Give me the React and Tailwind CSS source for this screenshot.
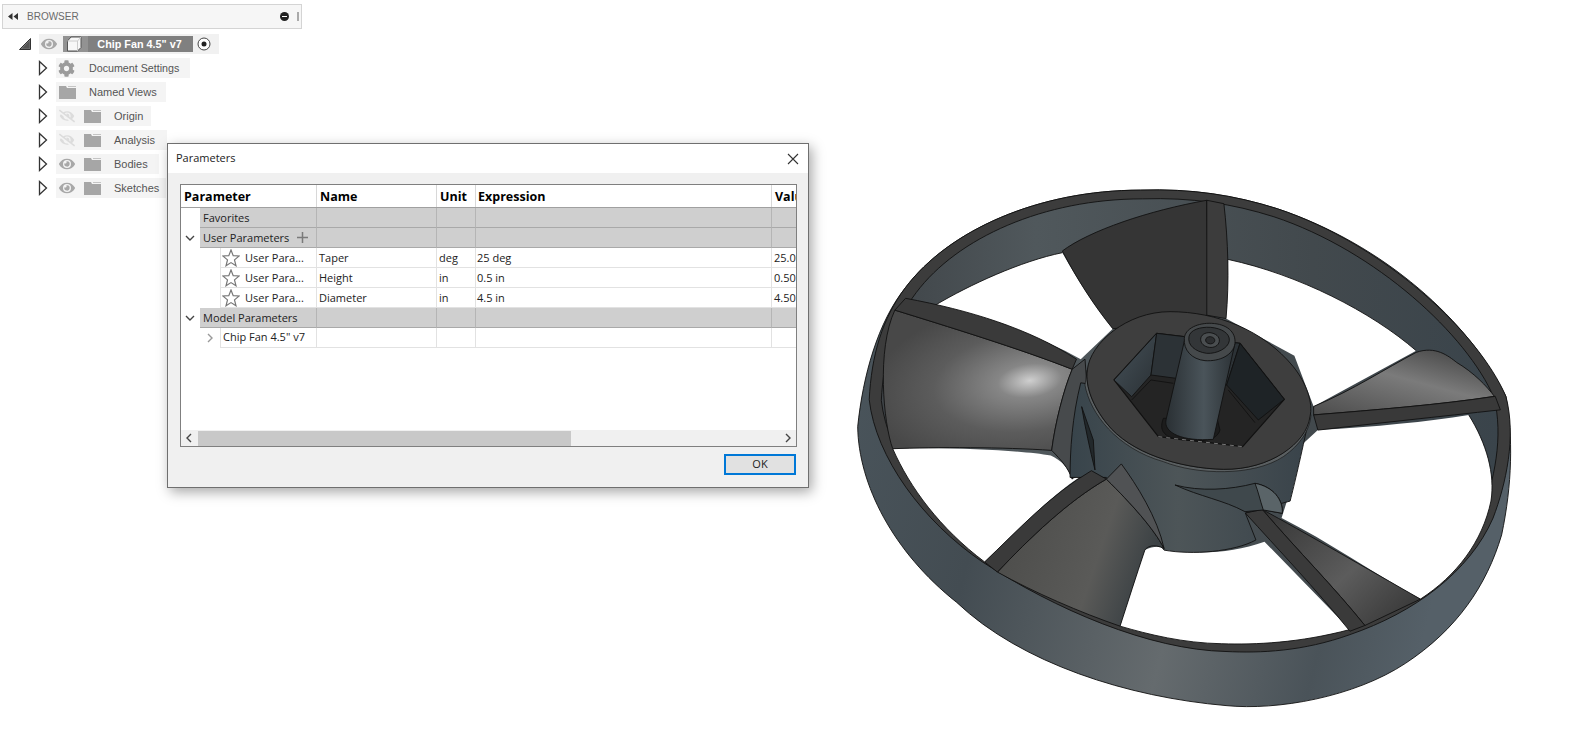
import React from 'react'
import { FaCog, FaEye, FaEyeSlash } from 'react-icons/fa'

const dialogFont = { fontFamily: '"Open Sans", "Noto Sans", sans-serif' }

const Expander = () => (
  <svg width="10" height="16" viewBox="0 0 10 16" className="shrink-0">
    <path d="M1.5 1.5 L8.5 8 L1.5 14.5 Z" fill="#fff" stroke="#333" strokeWidth="1.3" />
  </svg>
)

const Folder = () => (
  <svg width="17" height="13" viewBox="0 0 17 13" className="shrink-0">
    <path d="M0 0 H7 L8 2 H17 V13 H0 Z" fill="#a6a6a6" />
    <path d="M9 0 H17 V1 H9 Z" fill="#c4c4c4" />
  </svg>
)

// one row of the browser tree
const TreeRow = ({ label, width, eye, gear }) => (
  <div className="flex items-center h-5 mb-1">
    <div className="w-[36px]" />
    <Expander />
    <div className="ml-[8px] h-5 flex items-center bg-[#f4f4f4]" style={{ width }}>
      {eye === 'on' && <FaEye className="ml-[3px] w-[16px] h-[16px] text-[#a8a8a8] shrink-0" />}
      {eye === 'off' && <FaEyeSlash className="ml-[3px] w-[16px] h-[16px] text-[#dcdcdc] shrink-0" />}
      {gear ? (
        <FaCog className="ml-[2px] w-[17px] h-[17px] text-[#9b9b9b] shrink-0" />
      ) : (
        <div className={eye ? 'ml-[9px]' : 'ml-[3px]'}><Folder /></div>
      )}
      <span className={gear ? 'ml-[14px] text-[10.7px] text-[#555] whitespace-nowrap' : 'ml-[13px] text-[11px] text-[#555] whitespace-nowrap'}>{label}</span>
    </div>
  </div>
)

const Browser = () => (
  <div className="w-[303px] shrink-0 pl-[2px] pt-[4px]" style={{ fontFamily: '"Liberation Sans", Arial, sans-serif' }}>
    <div className="w-[300px] h-[25px] flex items-center bg-[#f6f6f6] border border-[#d4d4d4]">
      <svg width="10" height="7" viewBox="0 0 10 7" className="ml-[5px]">
        <path d="M4.5 0 L0 3.5 L4.5 7 Z M10 0 L5.5 3.5 L10 7 Z" fill="#333" />
      </svg>
      <span className="ml-[9px] text-[10px] text-[#6a6a6a]">BROWSER</span>
      <div className="ml-auto w-[9px] h-[9px] rounded-full bg-[#222] flex items-center justify-center">
        <div className="w-[5px] h-[1.5px] bg-white" />
      </div>
      <div className="ml-[8px] mr-[2px] w-[2px] h-[9px] border-x border-[#aaa]" />
    </div>
    <div className="flex items-center h-5 mt-[5px] mb-1">
      <svg width="12" height="12" viewBox="0 0 12 12" className="ml-[17px] shrink-0">
        <path d="M0.5 11.5 L11.5 0.5 V11.5 Z" fill="#777" stroke="#333" />
        <path d="M3 10.5 L10.5 3 V10.5 Z" fill="#555" />
      </svg>
      <div className="ml-[8px] w-[180px] h-5 flex items-center bg-[#f1f1f1]">
        <FaEye className="ml-[2px] w-[16px] h-[16px] text-[#a8a8a8] shrink-0" />
        <div className="ml-[6px] w-[25px] h-[16px] bg-[#929292] flex items-center pl-[3px]">
          <svg width="16" height="16" viewBox="0 0 16 16">
            <path d="M1.5 5 L5 1 H15 V11.5 L11.5 15 H1.5 Z" fill="#f7f7f7" stroke="#555" />
            <path d="M1.5 5 H11.5 V15 M11.5 5 L15 1" fill="none" stroke="#ccc" />
          </svg>
        </div>
        <div className="w-[105px] h-[16px] bg-[#808080] text-white text-[10.8px] font-bold flex items-center justify-center pr-[2px]">
          Chip Fan 4.5" v7
        </div>
        <svg width="14" height="14" viewBox="0 0 14 14" className="ml-[4px]">
          <circle cx="7" cy="7" r="6" fill="#fff" stroke="#444" />
          <circle cx="7" cy="7" r="2.5" fill="#222" />
        </svg>
      </div>
    </div>
    <TreeRow label="Document Settings" width={134} gear />
    <TreeRow label="Named Views" width={110} />
    <TreeRow label="Origin" width={95} eye="off" />
    <TreeRow label="Analysis" width={111} eye="off" />
    <TreeRow label="Bodies" width={103} eye="on" />
    <TreeRow label="Sketches" width={110} eye="on" />
  </div>
)

const Chevron = ({ right }) => (
  <svg width="10" height="10" viewBox="0 0 10 10" className="shrink-0">
    {right ? (
      <path d="M3 1 L7 5 L3 9" fill="none" stroke="#999" strokeWidth="1.4" />
    ) : (
      <path d="M1 3 L5 7 L9 3" fill="none" stroke="#444" strokeWidth="1.4" />
    )}
  </svg>
)

const Star = () => (
  <svg width="18" height="18" viewBox="0 0 18 18" className="shrink-0">
    <path d="M9 1 L11.2 6.6 L17.2 7 L12.5 10.9 L14 16.8 L9 13.6 L4 16.8 L5.5 10.9 L0.8 7 L6.8 6.6 Z" fill="#fff" stroke="#777" strokeWidth="1.2" />
  </svg>
)

const columns = 'grid grid-cols-[135px_120px_39px_296px_30px]'

const GroupRow = ({ label, open, plus }) => (
  <div className={`${columns} h-5`}>
    <div className="flex items-center">
      <div className="w-[19px] flex justify-center pr-[1px]">{open && <Chevron />}</div>
      <div className="h-5 flex-1 bg-[#cfcfcf] border-b border-[#a9a9a9] flex items-center pl-[3px] whitespace-nowrap">
        <span className="pt-[1px]">{label}</span>
        {plus && (
          <svg width="11" height="11" viewBox="0 0 11 11" className="ml-[8px]">
            <path d="M5.5 0 V11 M0 5.5 H11" stroke="#7a7a7a" strokeWidth="1.5" />
          </svg>
        )}
      </div>
    </div>
    {[0, 1, 2, 3].map((i) => (
      <div key={i} className="bg-[#cfcfcf] border-b border-l border-b-[#a9a9a9] border-l-[#b5b5b5]" />
    ))}
  </div>
)

const ParamRow = ({ name, unit, expr, value }) => (
  <div className={`${columns} h-5`}>
    <div className="flex items-center pl-[39px]">
      <div className="h-5 flex-1 flex items-center border-l border-b border-[#e2e2e2] pl-[1px] gap-[5px] whitespace-nowrap">
        <Star />
        <span className="pt-[1px]">User Para...</span>
      </div>
    </div>
    <div className="flex items-center pl-[2px] pt-[1px] border-b border-l border-[#e2e2e2]">{name}</div>
    <div className="flex items-center pl-[2px] pt-[1px] border-b border-l border-[#e2e2e2]">{unit}</div>
    <div className="flex items-center pl-[1px] pt-[1px] border-b border-l border-[#e2e2e2]">{expr}</div>
    <div className="flex items-center pl-[2px] pt-[1px] border-b border-l border-[#e2e2e2] overflow-hidden">{value}</div>
  </div>
)

const ParametersDialog = () => (
  <div
    className="absolute left-[167px] top-[143px] w-[642px] h-[345px] bg-[#f0f0f0] border border-[#6f6f6f] shadow-[3px_4px_12px_rgba(0,0,0,0.35)] flex flex-col"
    style={dialogFont}
  >
    <div className="h-[29px] bg-white flex items-center justify-between pl-[8px] pr-[9px] shrink-0">
      <span className="text-[11px] text-[#222]">Parameters</span>
      <svg width="12" height="12" viewBox="0 0 12 12">
        <path d="M1 1 L11 11 M11 1 L1 11" stroke="#333" strokeWidth="1.1" />
      </svg>
    </div>
    <div className="mx-[12px] mt-[11px] w-[617px] h-[263px] bg-white border border-[#7f7f7f] flex flex-col overflow-hidden text-[11px] text-[#222]">
      <div className={`${columns} h-[23px] font-bold text-[12.5px] text-black border-b border-[#a0a0a0]`}>
        <div className="pl-[3px] pt-[2px] flex items-center">Parameter</div>
        <div className="pl-[3px] pt-[2px] flex items-center border-l border-[#d8d8d8]">Name</div>
        <div className="pl-[3px] pt-[2px] flex items-center border-l border-[#d8d8d8]">Unit</div>
        <div className="pl-[2px] pt-[2px] flex items-center border-l border-[#d8d8d8]">Expression</div>
        <div className="pl-[3px] pt-[2px] flex items-center border-l border-[#d8d8d8] overflow-hidden">Value</div>
      </div>
      <GroupRow label="Favorites" />
      <GroupRow label="User Parameters" open plus />
      <ParamRow name="Taper" unit="deg" expr="25 deg" value="25.00" />
      <ParamRow name="Height" unit="in" expr="0.5 in" value="0.50" />
      <ParamRow name="Diameter" unit="in" expr="4.5 in" value="4.50" />
      <GroupRow label="Model Parameters" open />
      <div className={`${columns} h-5`}>
        <div className="flex items-center">
          <div className="w-[39px] flex justify-end pr-[5px]"><Chevron right /></div>
          <div className="h-5 flex-1 border-l border-b border-[#e2e2e2] flex items-center pl-[2px] whitespace-nowrap">Chip Fan 4.5" v7</div>
        </div>
        <div className="border-b border-l border-[#e2e2e2]" />
        <div className="border-b border-l border-[#e2e2e2]" />
        <div className="border-b border-l border-[#e2e2e2]" />
        <div className="border-b border-l border-[#e2e2e2]" />
      </div>
      <div className="mt-auto h-[16px] bg-[#f0f0f0] flex items-center shrink-0">
        <div className="w-[16px] flex justify-center rotate-90"><Chevron /></div>
        <div className="ml-[1px] w-[373px] h-[15px] bg-[#c8c8c8]" />
        <div className="ml-auto w-[16px] flex justify-center -rotate-90"><Chevron /></div>
      </div>
    </div>
    <div className="flex justify-end pr-[12px] pt-[7px]">
      <button className="w-[72px] h-[21px] bg-[#e1e1e1] border-2 border-[#0078d7] text-[11px] text-[#222] flex items-center justify-center">OK</button>
    </div>
  </div>
)

// keeps line widths the same while the drawing groups below are scaled
const P = ({ d, fill = 'none', line = true, w = 0.9, stroke = '#111' }) => (
  <path d={d} fill={fill} stroke={line ? stroke : 'none'} strokeWidth={w} vectorEffect="non-scaling-stroke" strokeLinejoin="round" />
)

const OUTER_TOP = 'M45 650 C50 520 75 410 130 318 C230 150 440 30 680 30 C800 25 900 45 1000 85 C1250 190 1470 450 1535 640 C1560 760 1535 900 1505 1000 C1450 1160 1320 1280 1170 1345 C1060 1395 960 1400 880 1395 C700 1390 480 1270 310 1130 C170 1010 60 820 45 650 Z'

const Fan = () => (
  <svg width="670" height="530" viewBox="850 180 670 530" className="mt-[180px] ml-[547px] shrink-0">
    <defs>
      <linearGradient id="wall" x1="0" y1="0" x2="1" y2="0.2">
        <stop offset="0" stopColor="#4b565d" />
        <stop offset="0.3" stopColor="#434c52" />
        <stop offset="0.62" stopColor="#656b6e" />
        <stop offset="0.85" stopColor="#4a5359" />
        <stop offset="1" stopColor="#556068" />
      </linearGradient>
      <linearGradient id="innerWall" x1="0" y1="0" x2="1" y2="0">
        <stop offset="0" stopColor="#3f4448" />
        <stop offset="0.25" stopColor="#50585c" />
        <stop offset="0.7" stopColor="#42494d" />
        <stop offset="1" stopColor="#3a444b" />
      </linearGradient>
      <radialGradient id="leftBlade" gradientUnits="userSpaceOnUse" cx="420" cy="590" r="380" gradientTransform="rotate(-12 420 590) translate(0 210) scale(1 0.65)">
        <stop offset="0" stopColor="#cfcfcf" />
        <stop offset="0.2" stopColor="#868686" />
        <stop offset="0.6" stopColor="#5c5c5c" />
        <stop offset="1" stopColor="#484848" />
      </radialGradient>
      <linearGradient id="rightBlade" x1="0" y1="1" x2="0.75" y2="0">
        <stop offset="0" stopColor="#4c4c4c" />
        <stop offset="0.6" stopColor="#7b7b7b" />
        <stop offset="1" stopColor="#4a4a4a" />
      </linearGradient>
      <linearGradient id="lowerLeft" x1="0" y1="0" x2="1" y2="0.3">
        <stop offset="0" stopColor="#4a4a48" />
        <stop offset="0.7" stopColor="#5a5a58" />
        <stop offset="1" stopColor="#3b4144" />
      </linearGradient>
      <linearGradient id="lowerRight" x1="0" y1="0" x2="1" y2="0.8">
        <stop offset="0" stopColor="#343434" />
        <stop offset="0.6" stopColor="#5c5c5c" />
        <stop offset="1" stopColor="#3a3a3a" />
      </linearGradient>
      <linearGradient id="hubBody" x1="0" y1="0" x2="1" y2="0">
        <stop offset="0" stopColor="#38444b" />
        <stop offset="0.45" stopColor="#4d5558" />
        <stop offset="1" stopColor="#39434a" />
      </linearGradient>
      <linearGradient id="shaft" x1="0" y1="0" x2="1" y2="0">
        <stop offset="0" stopColor="#2a3034" />
        <stop offset="0.55" stopColor="#4a545a" />
        <stop offset="1" stopColor="#2c3236" />
      </linearGradient>
      <linearGradient id="hexWall" x1="0" y1="0" x2="1" y2="1">
        <stop offset="0" stopColor="#46525a" />
        <stop offset="1" stopColor="#2a3034" />
      </linearGradient>
    </defs>

    {/* coordinates traced on the fan crop, ring and blades */}
    <g transform="translate(850 180) scale(0.4273 0.338)">
      <P fill="url(#wall)" d="M18 730 C30 580 65 420 130 318 C230 150 440 30 680 30 C800 25 900 45 1000 85 C1250 190 1450 420 1535 640 C1552 760 1550 900 1525 1050 C1490 1200 1420 1330 1300 1430 C1180 1530 1000 1570 880 1555 C650 1530 400 1430 250 1250 C100 1100 20 900 18 730 Z" />
      <P fill="#3c3c3c" d={OUTER_TOP} />
      <g transform="translate(790 710) scale(0.962) translate(-790 -710)">
        <P fill="url(#innerWall)" d={OUTER_TOP} />
      </g>
      {/* see-through gaps between the blades */}
      <P fill="#fff" line={false} d="M885 235 C1050 280 1220 390 1325 505 L1085 670 L1040 520 L880 410 Z" />
      <P fill="#fff" line={false} d="M200 370 C280 310 400 240 497 215 C530 290 570 370 615 440 L540 530 C440 460 320 410 200 370 Z" />
      <P fill="#fff" line={false} d="M100 795 C250 790 400 800 470 815 C495 830 510 850 520 885 L560 860 C470 930 390 1040 315 1130 C210 1030 140 910 100 795 Z" />
      <P fill="#fff" line={false} d="M632 1320 C650 1250 670 1170 690 1095 C720 1075 735 1090 750 1095 C830 1110 900 1100 970 1070 L1170 1330 C1050 1370 950 1375 870 1372 C780 1370 700 1345 632 1320 Z" />
      <P fill="#fff" line={false} d="M1095 740 C1230 730 1350 715 1448 695 C1490 780 1510 870 1500 950 C1480 1070 1420 1170 1335 1240 C1220 1160 1120 1070 1010 1000 L1035 900 L1060 780 Z" />
      <P d="M885 235 C1050 280 1220 390 1325 505" />
      <P d="M200 370 C280 310 400 240 497 215" />
      <P d="M315 1130 C210 1030 140 910 100 795" />
      <P d="M1170 1330 C1050 1370 950 1375 870 1372 C780 1370 700 1345 632 1320" />
      <P d="M1448 695 C1490 780 1510 870 1500 950 C1480 1070 1420 1170 1335 1240" />

      {/* top blade */}
      <P fill="#353535" d="M497 210 C560 150 700 90 835 60 L840 410 L615 440 C570 370 530 290 497 210 Z" />
      <P fill="#3c3c3c" d="M835 60 L875 70 C885 180 888 300 880 410 L835 400 Z" />
      {/* left blade */}
      <P fill="url(#leftBlade)" d="M105 385 C220 430 400 500 520 560 C500 620 480 720 472 800 C360 790 200 790 100 795 C78 720 62 500 105 385 Z" />
      <P fill="#3a3a3a" d="M130 350 C280 385 420 440 530 530 L520 560 C400 500 220 430 105 385 Z" />
      <P fill="#474a4c" d="M520 560 C500 620 480 720 472 800 C495 830 510 850 520 885 L560 700 L550 530 Z" />
      {/* right blade */}
      <P fill="url(#rightBlade)" d="M1085 670 C1180 620 1250 560 1325 510 C1370 490 1400 520 1420 540 C1460 570 1490 610 1508 640 C1380 665 1230 680 1085 695 Z" />
      <P fill="#393939" d="M1085 695 C1230 680 1380 665 1510 640 L1522 680 C1380 700 1230 720 1095 740 Z" />
      {/* lower right blade */}
      <P fill="url(#lowerRight)" d="M965 975 C1060 1040 1210 1150 1335 1240 L1205 1318 C1130 1200 1050 1100 965 975 Z" />
      <P fill="#3a3a3a" d="M925 985 L965 975 C1050 1100 1130 1200 1205 1318 L1170 1335 C1090 1210 1000 1090 925 985 Z" />
      {/* hub side */}
      <P fill="url(#hubBody)" d="M540 600 C520 700 515 800 515 880 L600 880 L735 1095 C800 1110 900 1100 950 1065 L925 985 L1030 950 C1040 900 1055 820 1075 700 Z" />
      {/* lower left blade */}
      <P fill="url(#lowerLeft)" d="M345 1160 C420 1060 510 950 600 885 C660 960 710 1030 735 1090 C710 1075 695 1085 690 1095 C670 1170 650 1250 632 1320 C540 1280 430 1220 345 1160 Z" />
      <P fill="#3a3a3a" d="M315 1130 C390 1040 470 930 565 860 L600 885 C510 950 420 1060 345 1160 Z" />
      <P fill="#505254" d="M600 885 L635 840 C670 900 720 1000 735 1090 C710 1030 660 960 600 885 Z" />
    </g>

    {/* coordinates traced on the hub crop */}
    <g transform="translate(1050 300) scale(0.3333)">
      <P fill="#3f484c" d="M375 555 C450 575 540 570 615 550 C670 560 700 600 697 640 L640 630 L585 635 C520 600 450 590 375 555 Z" />
      <P fill="#5a6468" d="M615 550 C670 560 700 600 697 640 L640 630 C630 600 625 575 615 550 Z" />
      <P fill="#22282b" d="M95 320 C105 380 120 450 135 510 L130 420 Z" />
      <P fill="#5a5f61" w={0.6} d="M105 255 C120 340 200 445 340 485 C440 525 610 530 700 470 C750 435 780 390 783 345 L780 340 C770 430 660 510 520 508 C390 505 240 460 170 370 C130 320 105 260 112 210 Z" />
      <P fill="#3e3e3e" d="M112 210 C120 130 230 35 360 35 C500 35 640 90 730 200 C770 250 790 310 780 350 C770 430 660 510 520 508 C390 505 240 460 170 370 C130 320 105 260 112 210 Z" />
      {/* hex pocket */}
      <P fill="#242424" w={1.2} d="M192 240 L320 100 L570 130 L703 298 L578 440 L325 410 Z" />
      <P fill="url(#hexWall)" d="M192 240 L320 100 L303 225 L245 290 Z" />
      <P fill="#2c3236" d="M320 100 L570 130 L530 255 L303 225 Z" />
      <P fill="#1e2326" d="M570 130 L703 298 L625 360 L530 255 Z" />
      <P d="M303 240 L245 300 M303 240 L370 250 M535 270 L615 368" />
      {/* shaft */}
      <P fill="#1c1c1c" d="M340 355 C325 395 345 415 400 420 C450 425 500 425 510 390 L500 350 Z" />
      <P fill="url(#shaft)" d="M405 115 L348 360 C340 400 400 425 490 418 L555 130 Z" />
      <path d="M325 410 L578 440" stroke="#777" strokeWidth="1" strokeDasharray="4 4" vectorEffect="non-scaling-stroke" />
      <P fill="#45494b" d="M403 115 C405 85 445 68 485 70 C530 72 558 95 555 130 C550 165 510 185 465 182 C425 178 400 150 403 115 Z" />
      <P fill="#333638" d="M417 110 C420 90 450 80 482 82 C515 85 540 100 538 122 C535 145 500 162 470 160 C435 155 412 135 417 110 Z" />
      <P fill="#4a4e50" d="M452 118 C452 105 465 97 480 98 C497 100 510 110 508 124 C506 137 492 144 478 142 C462 140 452 130 452 118 Z" />
      <P fill="#2c2e30" d="M467 120 C467 113 474 110 481 110 C490 111 496 117 494 124 C492 130 484 133 477 131 C470 129 467 125 467 120 Z" />
    </g>
  </svg>
)

export default function App() {
  return (
    <div className="relative w-[1573px] h-[750px] bg-white overflow-hidden flex items-start">
      <Browser />
      <Fan />
      <ParametersDialog />
    </div>
  )
}
